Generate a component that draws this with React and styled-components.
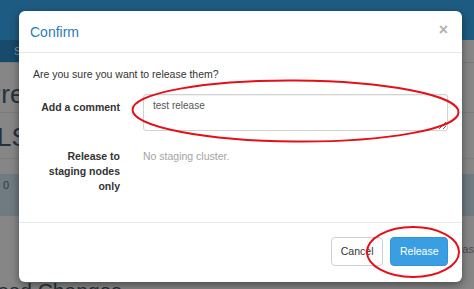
import React from "react";
import styled, { createGlobalStyle } from "styled-components";

const GlobalStyle = createGlobalStyle`
  html, body { margin: 0; padding: 0; }
  body {
    font-family: "Liberation Sans", Helvetica, Arial, sans-serif;
    background: #868686;
  }
  * { box-sizing: border-box; }
`;

const Page = styled.div`
  position: relative;
  width: 474px;
  height: 289px;
  overflow: hidden;
  background: #868686;
  display: flex;
  flex-direction: column;
`;

const Navbar = styled.div`
  height: 40px;
  flex: none;
  background: #1e5b82;
`;

const SubNav = styled.div`
  height: 23px;
  flex: none;
  display: flex;
  border-bottom: 1px solid #7a7a7a;
`;

const Tab = styled.div`
  width: 60px;
  background: ${(p) => (p.$active ? "#174a6b" : "transparent")};
  color: #8a9aa6;
  font-size: 11px;
  line-height: 23px;
  padding-left: 14px;
`;

const HeadingRow = styled.div`
  height: ${(p) => p.$h}px;
  flex: none;
  display: flex;
  align-items: flex-end;
  padding-bottom: ${(p) => p.$pb}px;
  border-bottom: 1px solid #7c7c7c;
  color: #26313a;
  font-size: 26px;
  line-height: 26px;
  white-space: nowrap;
  text-indent: ${(p) => p.$indent}px;
`;

const Band = styled.div`
  margin-top: 15px;
  height: 42px;
  flex: none;
  background: #6f7a81;
  color: #2e3a42;
  font-size: 11px;
  padding-top: 5px;
  text-indent: -3px;
  display: flex;
  justify-content: space-between;
`;

const SideNote = styled.div`
  margin-top: 27px;
  height: 20px;
  flex: none;
  display: flex;
  justify-content: flex-end;
  color: #4e4e4e;
  font-size: 11px;
  overflow: hidden;
`;

const BottomHeading = styled.div`
  margin-top: 17px;
  flex: none;
  color: #26313a;
  font-size: 21px;
  line-height: 21px;
  white-space: nowrap;
  text-indent: -2px;
`;

const Modal = styled.div`
  position: absolute;
  left: 19px;
  top: 11px;
  width: 443px;
  height: 271px;
  background: #fff;
  border-radius: 6px;
  box-shadow: 0 3px 9px rgba(0, 0, 0, 0.45);
  display: flex;
  flex-direction: column;
`;

const ModalHeader = styled.div`
  height: 42px;
  flex: none;
  display: flex;
  align-items: center;
  justify-content: space-between;
  padding: 0 14px 0 11px;
  border-bottom: 1px solid #e8e8e8;
`;

const Title = styled.h4`
  margin: 0;
  color: #2d7bb5;
  font-size: 14px;
  font-weight: 400;
  line-height: 18px;
  padding-top: 1px;
`;

const Close = styled.span`
  color: #b2b2b2;
  font-size: 16px;
  font-weight: 700;
  line-height: 16px;
  margin-top: -3px;
`;

const ModalBody = styled.div`
  flex: 1;
  padding: 14px 14px 0 14px;
  color: #333;
  font-size: 10.5px;
  line-height: 15px;
  border-bottom: 1px solid #e8e8e8;
`;

const Lead = styled.p`
  margin: 0 0 12px 0;
`;

const FormRow = styled.div`
  display: grid;
  grid-template-columns: 87px 1fr;
  column-gap: 23px;
  margin-bottom: ${(p) => p.$mb}px;
`;

const Label = styled.label`
  text-align: right;
  font-weight: 700;
  padding-top: ${(p) => p.$pt}px;
  padding-left: 8px;
`;

const Comment = styled.textarea`
  display: block;
  width: 305px;
  height: 37px;
  margin: 0;
  padding: 4px 9px;
  border: 1px solid #d2d2d2;
  border-radius: 3px;
  font-family: "Liberation Sans", Helvetica, Arial, sans-serif;
  font-size: 10px;
  line-height: 14px;
  color: #555;
  box-shadow: inset 0 1px 1px rgba(0, 0, 0, 0.06);
  resize: both;
`;

const Muted = styled.div`
  color: #a4a4a4;
`;

const Footer = styled.div`
  height: 59px;
  flex: none;
  display: flex;
  justify-content: flex-end;
  align-items: flex-start;
  gap: 7px;
  padding: 14px 14px 0 0;
`;

const Button = styled.button`
  height: 29px;
  padding: 0 ${(p) => (p.$primary ? 8.5 : 9)}px;
  border-radius: 4px;
  border: 1px solid ${(p) => (p.$primary ? "#2f94d8" : "#cfcfcf")};
  background: ${(p) => (p.$primary ? "#3a9fe2" : "#fff")};
  color: ${(p) => (p.$primary ? "#fff" : "#333")};
  font-family: "Liberation Sans", Helvetica, Arial, sans-serif;
  font-size: 10.5px;
  line-height: 15px;
  cursor: pointer;
`;

const Annotations = styled.svg`
  position: absolute;
  left: 0;
  top: 0;
  pointer-events: none;
`;

export default function App() {
  return (
    <>
      <GlobalStyle />
      <Page>
        <Navbar />
        <SubNav>
          <Tab $active>Summary</Tab>
        </SubNav>
        <HeadingRow $h={50} $pb={5} $indent={-16}>Preview</HeadingRow>
        <HeadingRow $h={46} $pb={8} $indent={-3}>LS</HeadingRow>
        <Band>
          <span>: 0</span>
        </Band>
        <SideNote>
          <span>eas</span>
        </SideNote>
        <BottomHeading>sed Changes</BottomHeading>

        <Modal>
          <ModalHeader>
            <Title>Confirm</Title>
            <Close>×</Close>
          </ModalHeader>
          <ModalBody>
            <Lead>Are you sure you want to release them?</Lead>
            <FormRow $mb={18}>
              <Label $pt={6}>Add a comment</Label>
              <Comment defaultValue="test release" />
            </FormRow>
            <FormRow $mb={12}>
              <Label $pt={0}>Release to staging nodes only</Label>
              <Muted>No staging cluster.</Muted>
            </FormRow>
          </ModalBody>
          <Footer>
            <Button>Cancel</Button>
            <Button $primary>Release</Button>
          </Footer>
        </Modal>

        <Annotations width="474" height="289" viewBox="0 0 474 289">
          <ellipse
            cx="295.5"
            cy="111"
            rx="163"
            ry="30.5"
            fill="none"
            stroke="#e3101a"
            strokeWidth="2"
            transform="rotate(0.4 295.5 111)"
          />
          <ellipse
            cx="413"
            cy="252"
            rx="46"
            ry="25"
            fill="none"
            stroke="#e3101a"
            strokeWidth="2"
          />
        </Annotations>
      </Page>
    </>
  );
}
